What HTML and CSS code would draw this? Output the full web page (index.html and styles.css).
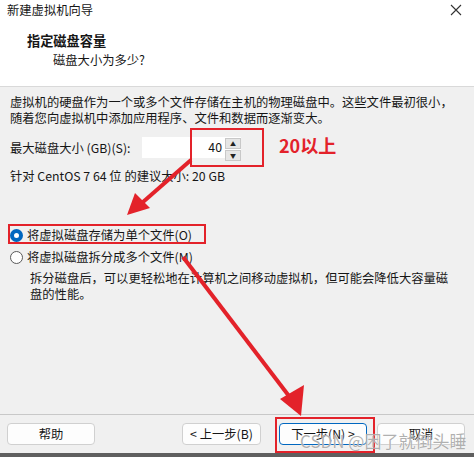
FILE: index.html
```html
<!DOCTYPE html>
<html lang="zh-CN">

<head>
  <meta charset="UTF-8" />
  <meta name="viewport" content="width=device-width, initial-scale=1.0" />
  <title>新建虚拟机向导</title>
  <link rel="stylesheet" href="styles.css">
</head>

<body>
  <div class="window">
    <div class="header">
      <div class="titlebar">
        <span class="title">新建虚拟机向导</span>
        <svg class="close" width="12" height="12" viewBox="0 0 12 12">
          <path d="M1 1 L11 11 M11 1 L1 11" stroke="#333" stroke-width="1.1" fill="none" />
        </svg>
      </div>
      <div class="heading">指定磁盘容量</div>
      <div class="subheading">磁盘大小为多少?</div>
    </div>

    <div class="content">
      <p class="intro">虚拟机的硬盘作为一个或多个文件存储在主机的物理磁盘中。这些文件最初很小，</p>
      <p>随着您向虚拟机中添加应用程序、文件和数据而逐渐变大。</p>

      <div class="size-row">
        <span class="size-label">最大磁盘大小 (GB)(S):</span>
        <div class="spin">
          <span class="spin-value">40</span>
          <div class="spin-btns">
            <span class="spin-btn">&#9650;</span>
            <span class="spin-btn">&#9660;</span>
          </div>
        </div>
      </div>

      <p class="hint">针对 CentOS 7 64 位 的建议大小: 20 GB</p>

      <div class="radio-row first"><span class="radio checked"></span>将虚拟磁盘存储为单个文件(O)</div>
      <div class="radio-row"><span class="radio"></span>将虚拟磁盘拆分成多个文件(M)</div>
      <p class="desc first-line">拆分磁盘后，可以更轻松地在计算机之间移动虚拟机，但可能会降低大容量磁</p>
      <p class="desc">盘的性能。</p>
    </div>

    <div class="footer">
      <button class="btn help">帮助</button>
      <div class="nav">
        <button class="btn back">&lt; 上一步(B)</button>
        <button class="btn primary">下一步(N) &gt;</button>
        <button class="btn">取消</button>
      </div>
    </div>
    <div class="edge"></div>

    <!-- annotations drawn over the dialog -->
    <div class="mark mark-size"></div>
    <div class="mark mark-radio"></div>
    <div class="mark mark-next"></div>
    <div class="note">20以上</div>
    <svg class="arrows" width="474" height="457" viewBox="0 0 474 457">
      <line x1="191" y1="160" x2="143" y2="202" stroke="#e3222a" stroke-width="4" />
      <polygon points="127,215 135,193 150,208" fill="#e3222a" />
      <line x1="183" y1="257" x2="292" y2="400" stroke="#e3222a" stroke-width="4" />
      <polygon points="301,416 280,399 304,385" fill="#e3222a" />
    </svg>
    <div class="watermark">CSDN @困了就倒头睡</div>
  </div>
</body>

</html>
```

FILE: styles.css
```css
* {
  box-sizing: border-box;
}

body {
  margin: 0;
  padding: 0;
  font-family: "Noto Sans CJK SC", "Noto Sans", sans-serif;
  font-size: 12.3px;
  color: #161616;
  background-color: #f0f0f0;
}

.window {
  position: relative;
  width: 474px;
  height: 457px;
  display: flex;
  flex-direction: column;
  background-color: #f0f0f0;
  overflow: hidden;
}

.header {
  height: 87px;
  background-color: #ffffff;
  border-bottom: 1px solid #d9d9d9;
}

.titlebar {
  height: 20px;
  display: flex;
  align-items: center;
  justify-content: space-between;
  padding: 0 12px 0 7px;
}

.title {
  line-height: 16px;
}

.heading {
  margin-top: 13px;
  padding-left: 27px;
  font-size: 13.2px;
  font-weight: bold;
  line-height: 16px;
}

.subheading {
  margin-top: 3px;
  padding-left: 53px;
  line-height: 16px;
}

.content {
  flex: 1;
  padding: 0 10px;
}

p {
  margin: 0;
  line-height: 16px;
}

.intro {
  margin-top: 7px;
}

.size-row {
  margin-top: 11px;
  display: flex;
  align-items: center;
  height: 21px;
}

.size-label {
  width: 132px;
}

.spin {
  display: flex;
  width: 99px;
  height: 21px;
  background-color: #ffffff;
}

.spin-value {
  flex: 1;
  text-align: right;
  padding-right: 3px;
  line-height: 21px;
}

.spin-btns {
  width: 16px;
  display: flex;
  flex-direction: column;
  gap: 1px;
  padding: 1px 0;
}

.spin-btn {
  flex: 1;
  display: flex;
  align-items: center;
  justify-content: center;
  font-size: 6px;
  color: #222;
  background-color: #e6e6e6;
  border: 1px solid #c8c8c8;
}

.hint {
  margin-top: 10px;
}

.radio-row {
  display: flex;
  align-items: center;
  gap: 4px;
  height: 16px;
  line-height: 16px;
  margin-top: 6px;
}

.radio-row.first {
  margin-top: 43px;
}

.radio {
  width: 13px;
  height: 13px;
  border-radius: 50%;
  border: 1px solid #5a5a5a;
  background-color: #ffffff;
  flex-shrink: 0;
}

.radio.checked {
  border: 4px solid #0067c0;
}

.desc {
  padding-left: 20px;
}

.desc.first-line {
  margin-top: 5px;
}

.footer {
  height: 39px;
  border-top: 1px solid #c8c8c8;
  display: flex;
  align-items: center;
  justify-content: space-between;
  padding: 0 9px 0 7px;
}

.nav {
  display: flex;
  gap: 10px;
}

.btn {
  font-family: inherit;
  font-size: 12.3px;
  color: #161616;
  height: 22px;
  width: 88px;
  padding: 0;
  background-color: #fdfdfd;
  border: 1px solid #d0d0d0;
  border-radius: 4px;
}

.btn.back {
  width: 79px;
  margin-right: 8px;
}

.btn.primary {
  border: 1.5px solid #0067c0;
}

.edge {
  height: 4px;
  background-color: #5f5f5f;
}

.mark {
  position: absolute;
  border: 2px solid #e3222a;
}

.mark-size {
  left: 190px;
  top: 128px;
  width: 74px;
  height: 39px;
}

.mark-radio {
  left: 8px;
  top: 224px;
  width: 198px;
  height: 20px;
}

.mark-next {
  left: 275px;
  top: 417px;
  width: 100px;
  height: 36px;
}

.note {
  position: absolute;
  left: 279px;
  top: 134px;
  font-size: 18px;
  font-weight: bold;
  color: #e3222a;
  line-height: 22px;
}

.arrows {
  position: absolute;
  left: 0;
  top: 0;
}

.watermark {
  position: absolute;
  left: 300px;
  top: 430px;
  font-size: 17px;
  line-height: 22px;
  color: rgba(150, 150, 150, 0.75);
  text-shadow: 0 0 1px #ffffff;
  white-space: nowrap;
}
```
